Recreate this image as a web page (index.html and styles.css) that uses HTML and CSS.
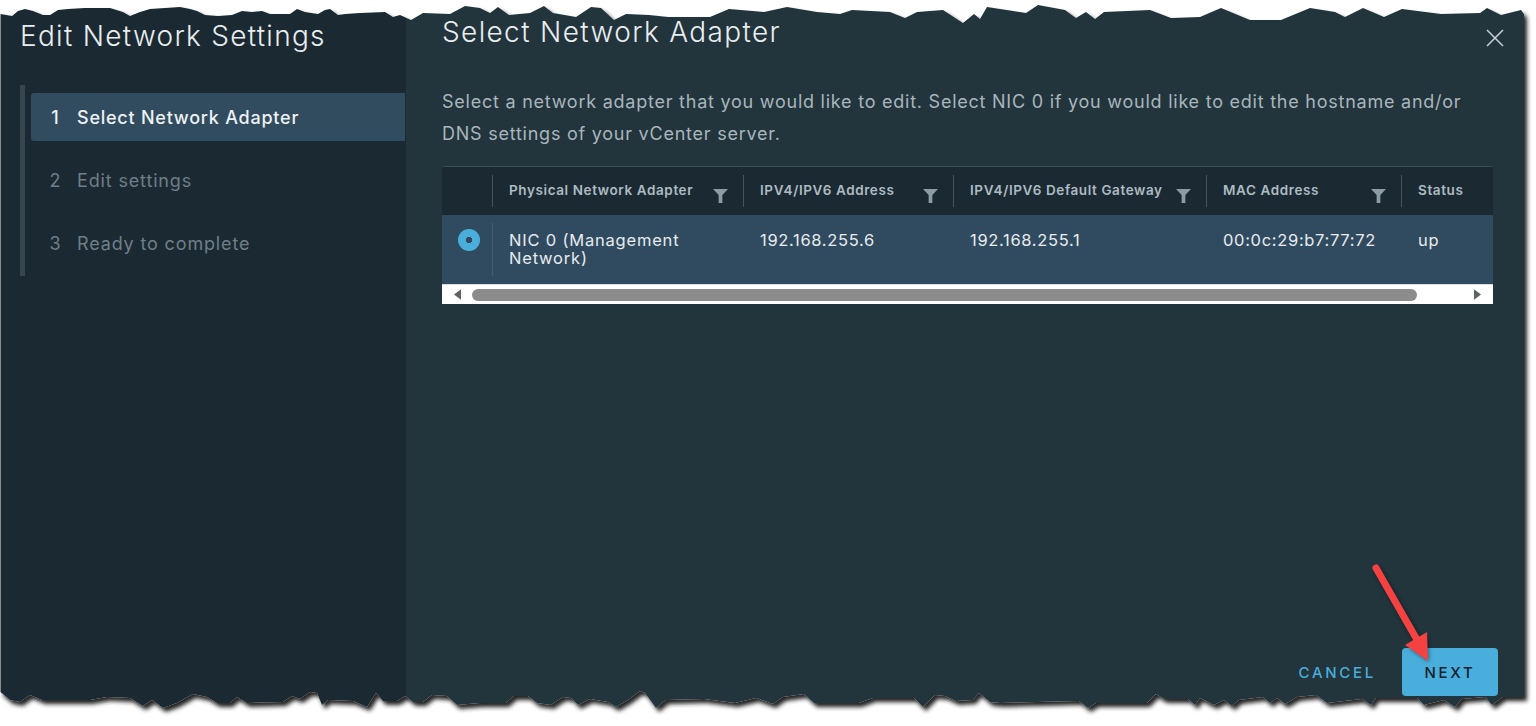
FILE: index.html
```html
<!DOCTYPE html>
<html lang="en">
<head>
<meta charset="utf-8">
<title>Edit Network Settings</title>
<link rel="stylesheet" href="styles.css">
</head>
<body>
<div class="dialog">
  <aside class="side">
    <h2 class="side-title">Edit Network Settings</h2>
    <ol class="steps">
      <li class="step active"><span class="num">1</span><span>Select Network Adapter</span></li>
      <li class="step"><span class="num">2</span><span>Edit settings</span></li>
      <li class="step"><span class="num">3</span><span>Ready to complete</span></li>
    </ol>
  </aside>
  <main class="main">
    <header class="head">
      <h1 class="title">Select Network Adapter</h1>
      <svg class="close" viewBox="0 0 18 18" aria-label="Close"><path d="M1 1L17 17M17 1L1 17"/></svg>
    </header>
    <p class="desc">Select a network adapter that you would like to edit. Select NIC 0 if you would like to edit the hostname and/or DNS settings of your vCenter server.</p>
    <div class="grid">
      <table class="table">
        <colgroup><col class="c0"><col class="c1"><col class="c2"><col class="c3"><col class="c4"><col class="c5"></colgroup>
        <thead>
          <tr>
            <th></th>
            <th><div class="th">Physical Network Adapter<svg class="funnel" viewBox="0 0 16 15"><path d="M0 0H16L10 6.5V15H6V6.5Z"/></svg></div></th>
            <th><div class="th">IPV4/IPV6 Address<svg class="funnel" viewBox="0 0 16 15"><path d="M0 0H16L10 6.5V15H6V6.5Z"/></svg></div></th>
            <th><div class="th">IPV4/IPV6 Default Gateway<svg class="funnel" viewBox="0 0 16 15"><path d="M0 0H16L10 6.5V15H6V6.5Z"/></svg></div></th>
            <th><div class="th">MAC Address<svg class="funnel" viewBox="0 0 16 15"><path d="M0 0H16L10 6.5V15H6V6.5Z"/></svg></div></th>
            <th><div class="th">Status</div></th>
          </tr>
        </thead>
        <tbody>
          <tr>
            <td class="radio-cell"><span class="radio"></span></td>
            <td><div class="td first">NIC 0 (Management Network)</div></td>
            <td><div class="td">192.168.255.6</div></td>
            <td><div class="td">192.168.255.1</div></td>
            <td><div class="td">00:0c:29:b7:77:72</div></td>
            <td><div class="td">up</div></td>
          </tr>
        </tbody>
      </table>
      <div class="scroll">
        <svg class="arrow" viewBox="0 0 8 12"><path d="M8 0V12L0 6Z"/></svg>
        <div class="track"><div class="thumb"></div></div>
        <svg class="arrow" viewBox="0 0 8 12"><path d="M0 0V12L8 6Z"/></svg>
      </div>
    </div>
    <footer class="foot">
      <button class="btn cancel">CANCEL</button>
      <button class="btn next">NEXT</button>
    </footer>
  </main>
</div>

<svg class="callout" viewBox="0 0 1536 726" aria-hidden="true">
  <defs>
    <filter id="soft" x="-10%" y="-10%" width="120%" height="120%"><feGaussianBlur stdDeviation="2"/></filter>
    <path id="paper" d="M0.5 14 L12 16 18 11 25 9 33 11 43 15 50 15 58 10 68 9 85 8 110 8 123 12 130 16 140 12 150 9 165 8 180 7 190 9 197 11 205 15 218 16 232 15 242 11 252 12 262 11 270 14 290 14 297 9 305 12 318 14 325 10 330 9 338 15 345 14 360 13 385 12 393 17 400 15 411 20 423 13 450 14 465 6 480 8 490 13 498 7 509 15 530 13 544 6 553 13 576 17 591 7 601 8 614 20 626 14 649 15 668 17 710 17 729 9 764 12 787 7 817 12 840 14 852 10 890 12 905 18 917 12 943 10 963 23 974 14 980 19 987 7 1026 13 1038 5 1065 10 1076 18 1086 12 1095 19 1104 12 1150 10 1171 18 1200 17 1221 8 1250 20 1281 20 1310 8 1335 12 1345 17 1363 8 1384 17 1402 9 1441 14 1480 13 1487 8 1501 15 1521 10 1524 14 L1524 697 1503 697 1492 705 1485 697 1462 699 1455 707 1444 700 1424 705 1417 698 1376 698 1371 705 1362 699 1327 703 1316 695 1297 697 1285 704 1277 698 1270 703 1263 697 1239 700 1232 706 1224 700 1214 705 1200 698 1195 705 1188 699 1164 699 1156 694 1147 703 1096 703 1088 708 1079 701 1000 703 990 702 979 693 973 700 956 701 945 696 935 695 923 707 914 698 873 698 859 703 814 703 804 694 783 697 773 704 756 698 735 703 704 699 666 700 656 708 645 693 640 691 628 700 616 707 608 702 590 699 578 705 571 698 563 697 551 705 537 703 528 696 514 696 506 703 480 703 457 705 447 696 432 695 423 702 413 702 405 696 397 701 383 701 376 693 367 707 353 701 328 700 322 705 317 693 310 692 300 699 292 696 283 702 247 703 237 697 230 703 217 703 207 697 193 694 177 703 163 708 152 700 143 706 130 698 107 697 90 700 42 700 30 695 20 702 10 700 0.5 692 Z"/>
    <clipPath id="outside"><path clip-rule="evenodd" d="M0 0H1536V726H0Z M0.5 14 L12 16 18 11 25 9 33 11 43 15 50 15 58 10 68 9 85 8 110 8 123 12 130 16 140 12 150 9 165 8 180 7 190 9 197 11 205 15 218 16 232 15 242 11 252 12 262 11 270 14 290 14 297 9 305 12 318 14 325 10 330 9 338 15 345 14 360 13 385 12 393 17 400 15 411 20 423 13 450 14 465 6 480 8 490 13 498 7 509 15 530 13 544 6 553 13 576 17 591 7 601 8 614 20 626 14 649 15 668 17 710 17 729 9 764 12 787 7 817 12 840 14 852 10 890 12 905 18 917 12 943 10 963 23 974 14 980 19 987 7 1026 13 1038 5 1065 10 1076 18 1086 12 1095 19 1104 12 1150 10 1171 18 1200 17 1221 8 1250 20 1281 20 1310 8 1335 12 1345 17 1363 8 1384 17 1402 9 1441 14 1480 13 1487 8 1501 15 1521 10 1524 14 L1524 697 1503 697 1492 705 1485 697 1462 699 1455 707 1444 700 1424 705 1417 698 1376 698 1371 705 1362 699 1327 703 1316 695 1297 697 1285 704 1277 698 1270 703 1263 697 1239 700 1232 706 1224 700 1214 705 1200 698 1195 705 1188 699 1164 699 1156 694 1147 703 1096 703 1088 708 1079 701 1000 703 990 702 979 693 973 700 956 701 945 696 935 695 923 707 914 698 873 698 859 703 814 703 804 694 783 697 773 704 756 698 735 703 704 699 666 700 656 708 645 693 640 691 628 700 616 707 608 702 590 699 578 705 571 698 563 697 551 705 537 703 528 696 514 696 506 703 480 703 457 705 447 696 432 695 423 702 413 702 405 696 397 701 383 701 376 693 367 707 353 701 328 700 322 705 317 693 310 692 300 699 292 696 283 702 247 703 237 697 230 703 217 703 207 697 193 694 177 703 163 708 152 700 143 706 130 698 107 697 90 700 42 700 30 695 20 702 10 700 0.5 692 Z"/></clipPath>
  </defs>
  <g clip-path="url(#outside)">
    <rect class="sheet" width="1536" height="726"/>
    <use href="#paper" class="shade" transform="translate(3 4)" filter="url(#soft)"/>
  </g>
  <g class="pointer-shadow" transform="translate(2 3)" filter="url(#soft)">
    <path d="M1376 568L1416 638" class="shaft"/><path d="M1427 659L1407 645 1426 633Z" class="head-fill"/>
  </g>
  <path d="M1376 568L1416 638" class="shaft"/>
  <path d="M1428 661L1405 645 1427 632Z" class="head-fill"/>
</svg>
</body>
</html>
```
FILE: styles.css
```css
* { box-sizing: border-box; }
html, body { margin: 0; padding: 0; background: #fff; }
body {
  width: 1536px;
  height: 726px;
  overflow: hidden;
  position: relative;
  font-family: Inter, "Liberation Sans", sans-serif;
}
.dialog {
  display: flex;
  width: 1524px;
  height: 726px;
  background: #22343c;
}
.side {
  width: 406px;
  flex: none;
  background: #1b2a32;
  padding: 19px 1px 0 20px;
}
.side-title {
  margin: 0;
  font-size: 28px;
  line-height: 34px;
  font-weight: 300;
  letter-spacing: 1.28px;
  white-space: nowrap;
  color: #e9edef;
}
.steps {
  list-style: none;
  margin: 32px 0 0;
  padding: 8px 0 9px 6px;
  border-left: 5px solid #36464e;
  display: flex;
  flex-direction: column;
  gap: 15px;
}
.step {
  height: 48px;
  display: flex;
  align-items: center;
  gap: 16px;
  padding-left: 18px;
  font-size: 18px;
  letter-spacing: .85px;
  color: #6f7e86;
}
.step.active {
  background: #314c5f;
  color: #eef2f4;
  border-radius: 3px 0 0 3px;
  font-weight: 500;
  letter-spacing: .76px;
}
.num { width: 12px; text-align: center; letter-spacing: 0; }
.main {
  flex: 1;
  min-width: 0;
  display: flex;
  flex-direction: column;
  padding: 15px 31px 30px 36px;
}
.head { display: flex; justify-content: space-between; align-items: flex-start; height: 34px; }
.title {
  margin: 0;
  font-size: 28px;
  line-height: 34px;
  font-weight: 300;
  letter-spacing: 1.36px;
  color: #e9edef;
}
.close {
  width: 18px;
  height: 18px;
  margin: 14px -11px 0 0;
  fill: none;
  stroke: #c3ced3;
  stroke-width: 1.6;
}
.desc {
  margin: 37px 0 0;
  font-size: 18px;
  line-height: 32px;
  letter-spacing: .76px;
  color: #a9b6bc;
}
.grid {
  margin-top: 16px;
  width: 1051px;
  border-radius: 3px 3px 0 0;
  overflow: hidden;
  box-shadow: inset 0 1px 0 #3a4d58;
}
.table {
  width: 100%;
  border-collapse: collapse;
  table-layout: fixed;
  margin-top: 1px;
}
.c0 { width: 50px; } .c1 { width: 251px; } .c2 { width: 210px; } .c3 { width: 253px; } .c4 { width: 195px; } .c5 { width: 92px; }
th, td { padding: 0; text-align: left; vertical-align: top; }
thead tr { background: #1b2a32; height: 48px; }
tbody tr { background: #304b5f; height: 69px; }
th { padding-top: 8px; }
.th {
  height: 32px;
  border-left: 1px solid #44555f;
  padding: 6px 15px 0 16px;
  display: flex;
  justify-content: space-between;
  font-size: 13.5px;
  line-height: 18px;
  font-weight: 600;
  letter-spacing: .6px;
  color: #aebbc2;
  white-space: nowrap;
}
.funnel { width: 15px; height: 14px; margin-top: 8px; flex: none; fill: #8b9ca4; }
td { padding-top: 8px; }
.radio-cell { padding-top: 14px; padding-left: 16px; }
.radio {
  display: block;
  width: 22px;
  height: 22px;
  border-radius: 50%;
  background: radial-gradient(circle, #304b5f 0 3px, #49aedb 3.5px);
}
.td {
  padding: 8px 10px 0 17px;
  font-size: 16.5px;
  line-height: 18px;
  letter-spacing: .68px;
  color: #e8ecee;
}
.td.first { border-left: 1px solid #44606f; height: 53px; padding-left: 16px; letter-spacing: .8px; }
.scroll {
  height: 20px;
  background: #fff;
  border-top: 1px solid #d8dde0;
  display: flex;
  align-items: center;
  gap: 11px;
  padding: 0 12px;
}
.arrow { width: 7px; height: 11px; flex: none; fill: #5d6468; }
.track { flex: 1; }
.thumb { width: 945px; height: 12px; border-radius: 6px; background: #8c8c8c; }
.foot {
  margin-top: auto;
  margin-right: -5px;
  display: flex;
  justify-content: flex-end;
  align-items: center;
  gap: 26px;
}
.btn {
  border: 0;
  background: none;
  padding: 0;
  font-family: inherit;
  font-size: 15px;
  letter-spacing: 2.7px;
  font-weight: 500;
}
.cancel { color: #49aedb; }
.next {
  width: 96px;
  height: 48px;
  background: #49aedb;
  border-radius: 4px;
  color: #12202a;
}
.callout { position: absolute; left: 0; top: 0; width: 1536px; height: 726px; pointer-events: none; }
.sheet { fill: #fff; }
.shade { fill: #222; }
.shaft { fill: none; stroke: #f44242; stroke-width: 7; stroke-linecap: round; }
.head-fill { fill: #f44242; }
.pointer-shadow { opacity: .45; }
.pointer-shadow .shaft { stroke: #000; }
.pointer-shadow .head-fill { fill: #000; }
```
